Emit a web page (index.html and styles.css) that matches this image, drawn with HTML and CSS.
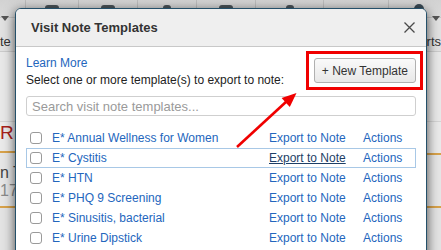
FILE: index.html
```html
<!doctype html>
<html>
<head>
    <meta charset="utf-8">
    <link rel="stylesheet" href="styles.css">
</head>
<body>
    <div id="page">
        <!-- page behind the dialog -->
        <ul class="toolbar">
            <li class="tool" style="width:26px"></li>
            <li class="tool" style="width:53px"><span class="ico ico-wide"></span></li>
            <li class="tool" style="width:59px"><span class="ico ico-wide"></span></li>
            <li class="tool" style="width:59px"><span class="ico"></span></li>
            <li class="tool" style="width:59px"><span class="ico ico-wide"></span></li>
            <li class="tool" style="width:68px"><span class="ico"></span></li>
            <li class="tool" style="width:65px"></li>
            <li class="tool tool-last"><span class="ico ico-round"></span></li>
        </ul>
        <div class="tabs">
            <span class="caret"></span>
            <span class="tab-label">te</span>
            <span class="tab-label">rts</span>
            <span class="caret"></span>
        </div>
        <div class="main">
            <div class="side">
                <div class="side-gap"></div>
                <div class="side-title">R</div>
                <div class="side-card">
                    <div class="side-line">n T</div>
                    <div class="side-sub">17</div>
                </div>
            </div>
            <div class="side side-right">
                <div class="side-gap"></div>
                <div class="side-title"></div>
                <div class="side-card"></div>
            </div>
        </div>

        <!-- dialog -->
        <div id="dialog">
            <div class="dlg-head">
                <span class="dlg-title">Visit Note Templates</span>
                <svg class="dlg-close" width="11" height="11" viewBox="0 0 11 11">
                    <path d="M0.5 0.5 L10.5 10.5 M10.5 0.5 L0.5 10.5" stroke="#4a4a4a" stroke-width="1.3" fill="none"/>
                </svg>
            </div>
            <div class="dlg-body">
                <div class="intro">
                    <div class="intro-text">
                        <a class="link">Learn More</a>
                        <div>Select one or more template(s) to export to note:</div>
                    </div>
                    <button class="btn">+ New Template</button>
                </div>
                <input class="search" type="text" placeholder="Search visit note templates...">
                <ul class="tpl-list">
                    <li class="tpl"><span class="chk"></span><a class="link">E* Annual Wellness for Women</a><a class="link">Export to Note</a><a class="link">Actions</a></li>
                    <li class="tpl tpl-hover"><span class="chk"></span><a class="link">E* Cystitis</a><a class="link link-hover">Export to Note</a><a class="link">Actions</a></li>
                    <li class="tpl"><span class="chk"></span><a class="link">E* HTN</a><a class="link">Export to Note</a><a class="link">Actions</a></li>
                    <li class="tpl"><span class="chk"></span><a class="link">E* PHQ 9 Screening</a><a class="link">Export to Note</a><a class="link">Actions</a></li>
                    <li class="tpl"><span class="chk"></span><a class="link">E* Sinusitis, bacterial</a><a class="link">Export to Note</a><a class="link">Actions</a></li>
                    <li class="tpl"><span class="chk"></span><a class="link">E* Urine Dipstick</a><a class="link">Export to Note</a><a class="link">Actions</a></li>
                </ul>
            </div>
        </div>

        <!-- annotation -->
        <div class="callout"></div>
        <svg class="arrow" width="441" height="250" viewBox="0 0 441 250">
            <line x1="237" y1="147" x2="287" y2="101" stroke="#f00000" stroke-width="2.6"/>
            <polygon points="296.5,93 289.8,107 281.6,98" fill="#f00000"/>
        </svg>
    </div>
</body>
</html>
```

FILE: styles.css
```css
*{
    margin: 0;
    padding: 0;
    list-style: none;
    box-sizing: border-box;
}
body{
    font-family: "Liberation Sans", Arial, sans-serif;
    font-size: 12px;
    color: #222;
}
#page{
    width: 441px;
    height: 250px;
    position: relative;
    overflow: hidden;
    background-color: #e3e3e3;
}
.toolbar{
    display: flex;
    height: 17px;
    background: linear-gradient(#d2d2d2, #dadada);
}
.tool{
    border-right: 1px solid #bcbcbc;
    display: flex;
    justify-content: center;
}
.tool-last{
    flex: 1;
    border-right: none;
    justify-content: flex-start;
    padding-left: 25px;
}
.ico{
    width: 8px;
    height: 6px;
    margin-top: 5px;
    background-color: #4a5358;
    border-radius: 3px 3px 0 0;
}
.ico-wide{
    width: 14px;
}
.ico-round{
    width: 10px;
    height: 10px;
    margin-top: 4px;
    border-radius: 5px;
    background-color: #3a4a55;
}
.tabs{
    display: flex;
    justify-content: space-between;
    height: 35px;
    padding-top: 15px;
    border-top: 1px solid #c6c6c6;
    border-bottom: 1px solid #cbcbcb;
    position: relative;
    background-color: #e1e1e1;
    font-size: 13px;
    color: #333;
}
.tab-label{
    line-height: 17px;
}
.caret{
    position: absolute;
    top: -2px;
    left: 1px;
    border: 4px solid transparent;
    border-top: 5px solid #555;
}
.caret:last-child{
    left: auto;
    right: 1px;
}
.main{
    display: flex;
    justify-content: space-between;
}
.side{
    width: 30px;
    display: flex;
    flex-direction: column;
}
.side-gap{
    height: 70px;
    background-color: #e8e8e8;
    border-bottom: 1px solid #d4d4d4;
}
.side-title{
    height: 31px;
    font-size: 19px;
    line-height: 22px;
    color: #a8201a;
    background-color: #eaeaea;
    border-bottom: 2px solid #d8a24a;
}
.side-card{
    height: 55px;
    padding-top: 11px;
    background-color: #e6e6e6;
    border-bottom: 2px solid #d8a24a;
    color: #444;
    font-size: 16px;
    white-space: nowrap;
}
.side-line{
    line-height: 18px;
}
.side-sub{
    color: #8a8a8a;
    line-height: 18px;
}
.side-right .side-title{
    height: 33px;
}
.side-right .side-card{
    height: 53px;
}

#dialog{
    position: absolute;
    left: 15px;
    top: 8px;
    width: 412px;
    height: 270px;
    background-color: #fff;
    border: 1px solid #24506a;
    border-radius: 6px;
    box-shadow: 0 3px 12px rgba(0, 0, 0, 0.7);
    overflow: hidden;
}
.dlg-head{
    height: 38px;
    display: flex;
    align-items: center;
    justify-content: space-between;
    padding: 0 11px 0 15px;
    background-color: #efefef;
    border-bottom: 1px solid #c8c8c8;
}
.dlg-title{
    font-size: 13px;
    font-weight: bold;
    color: #333;
}
.dlg-body{
    padding: 8px 10px 0 10px;
}
.intro{
    display: flex;
    justify-content: space-between;
    align-items: flex-start;
    line-height: 17px;
}
.link{
    color: #2366bd;
    text-decoration: none;
}
.link-hover{
    color: #1d3e66;
    text-decoration: underline;
}
.btn{
    margin-top: 3px;
    height: 25px;
    padding: 0 7px;
    font-family: inherit;
    font-size: 12px;
    color: #333;
    background: linear-gradient(#fafafa, #e8e8e8);
    border: 1px solid #b0b0b0;
    border-radius: 3px;
}
.search{
    display: block;
    width: 100%;
    height: 20px;
    margin-top: 7px;
    padding: 0 5px;
    font-family: inherit;
    font-size: 13px;
    border: 1px solid #cfcfcf;
    border-radius: 3px;
    outline: none;
}
.search::placeholder{
    color: #9a9a9a;
}
.tpl-list{
    margin-top: 12px;
}
.tpl{
    display: grid;
    grid-template-columns: 12px 1fr 84px 40px;
    column-gap: 10px;
    align-items: center;
    height: 20px;
    padding: 0 12px 0 3px;
    border: 1px solid transparent;
    white-space: nowrap;
}
.tpl-hover{
    border-color: #a8c8e6;
}
.chk{
    width: 12px;
    height: 12px;
    border: 1px solid #9a9a9a;
    border-radius: 3px;
    background-color: #fff;
}

.callout{
    position: absolute;
    left: 306px;
    top: 51px;
    width: 117px;
    height: 39px;
    border: 3px solid #f00000;
}
.arrow{
    position: absolute;
    left: 0;
    top: 0;
}
```
